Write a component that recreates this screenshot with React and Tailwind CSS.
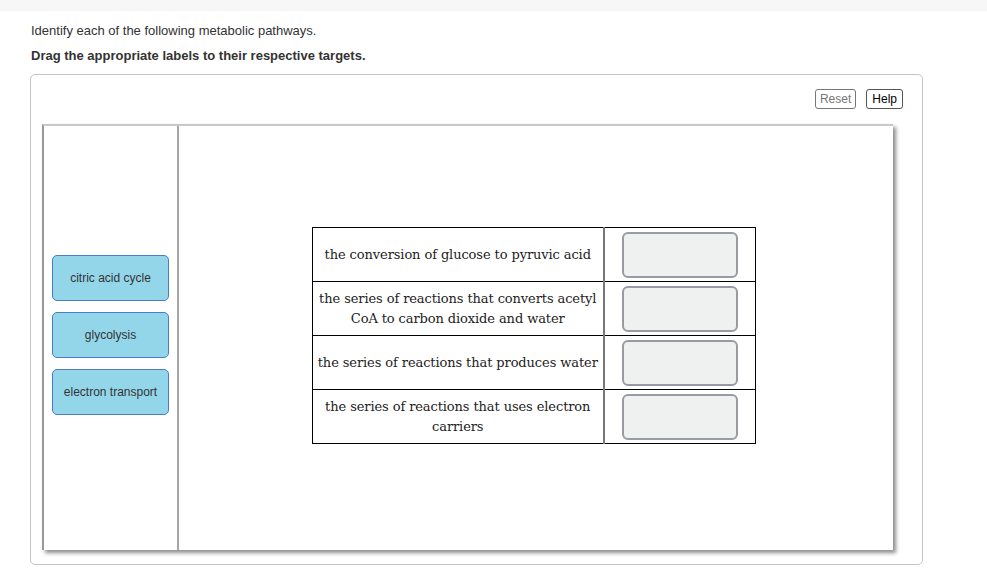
export default function App() {
  const labels = ["citric acid cycle", "glycolysis", "electron transport"];
  const rows = [
    "the conversion of glucose to pyruvic acid",
    "the series of reactions that converts acetyl CoA to carbon dioxide and water",
    "the series of reactions that produces water",
    "the series of reactions that uses electron carriers",
  ];
  return (
    <div className="min-h-[574px] w-[987px] bg-white font-['Liberation_Sans',Arial,sans-serif] text-[12px] text-[#333]">
      <div className="h-[11px] bg-[#f7f7f7]" />
      <div className="pl-[31px] pt-[11px] text-[13px]">
        <p className="leading-[17px]">Identify each of the following metabolic pathways.</p>
        <p className="mt-[8px] font-bold leading-[17px]">Drag the appropriate labels to their respective targets.</p>
      </div>
      <div className="ml-[30px] mt-[10px] h-[491px] w-[893px] rounded-[5px] border border-[#c4c4c4]">
        <div className="flex justify-end gap-[10px] pr-[19px] pt-[14px]">
          <button className="h-[20px] rounded-[3px] border border-[#777] px-[4px] text-[12px] leading-[18px] text-[#777]">Reset</button>
          <button className="h-[20px] rounded-[3px] border border-[#555] px-[5px] text-[12px] leading-[18px] text-black">Help</button>
        </div>
        <div className="ml-[11px] mt-[15px] flex h-[426px] w-[851px] border-t-2 border-l-2 border-t-[#c8c8c8] border-l-[#999] shadow-[3px_3px_4px_rgba(0,0,0,0.45)]">
          <div className="flex w-[133px] flex-col gap-[11px] pl-[8px] pt-[129px]">
            {labels.map((l) => (
              <div
                key={l}
                className="flex h-[46px] w-[117px] items-center justify-center rounded-[5px] border border-[#4a7dc6] bg-[#93d6ea] text-[12px] text-[#333]"
              >
                {l}
              </div>
            ))}
          </div>
          <div className="flex-1 border-l-2 border-[#a6a6a6] pl-[133px] pt-[101px]">
            <table className="border-collapse font-['DejaVu_Serif','Liberation_Serif',serif] text-[13px] tracking-[-0.1px] text-[#222]">
              <tbody>
                {rows.map((r) => (
                  <tr key={r} className="h-[54px]">
                    <td className="w-[291px] border border-black px-[4px] text-center leading-[20px]">{r}</td>
                    <td className="w-[151px] border border-black border-l-2 border-l-[#777] px-[17px]">
                      <div className="h-[46px] w-[116px] rounded-[6px] border-2 border-[#9a9aa6] bg-[#eff0f0]" />
                    </td>
                  </tr>
                ))}
              </tbody>
            </table>
          </div>
        </div>
      </div>
    </div>
  );
}
